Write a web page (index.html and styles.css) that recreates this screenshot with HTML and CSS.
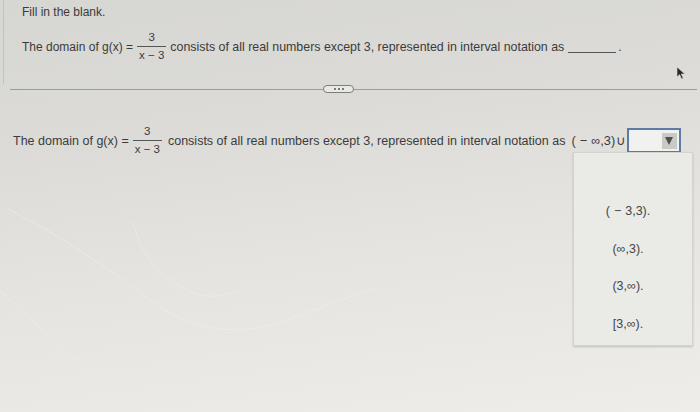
FILE: index.html
```html
<!DOCTYPE html>
<html>
<head>
<meta charset="utf-8">
<link rel="stylesheet" href="styles.css">
</head>
<body>
<div class="page">
  <svg class="glare" width="700" height="412" viewBox="0 0 700 412">
    <path d="M8 209 C 60 235, 110 270, 150 300 C 190 330, 230 335, 270 325 C 300 318, 320 305, 378 288" />
    <path d="M133 222 C 140 255, 165 285, 200 295 C 215 298, 228 295, 238 290" />
    <path d="M0 290 C 30 320, 60 345, 90 372" />
  </svg>

  <div class="top">
    <p class="prompt">Fill in the blank.</p>
    <div class="question">
      <span class="lead">The domain of g(x) =</span>
      <span class="frac"><span class="num">3</span><span class="den">x − 3</span></span>
      <span>consists of all real numbers except 3, represented in interval notation as</span>
      <span class="blank"></span><span>.</span>
    </div>
  </div>

  <div class="divider">
    <span class="rule rule-left"></span>
    <span class="pill"><i></i><i></i><i></i></span>
    <span class="rule"></span>
  </div>

  <svg class="cursor" width="12" height="14" viewBox="0 0 12 14">
    <path d="M2 1 L2 11 L4.6 8.6 L6.6 13 L8.2 12.3 L6.3 8 L9.8 8 Z" fill="#2a2a2a" stroke="#d8d8d4" stroke-width="0.6"/>
  </svg>

  <div class="answer">
    <span>The domain of g(x) =</span>
    <span class="frac frac-wide"><span class="num">3</span><span class="den">x − 3</span></span>
    <span>consists of all real numbers except 3, represented in interval notation as</span>
    <span class="interval">(<span class="op">−</span>∞,3)<span class="cup">∪</span></span>
    <span class="select"><span class="arrow"></span></span>
  </div>

  <ul class="options">
    <li>(<span class="op">−</span>3,3).</li>
    <li>(∞,3).</li>
    <li>(3,∞).</li>
    <li>[3,∞).</li>
  </ul>
</div>
</body>
</html>
```
FILE: styles.css
```css
* { box-sizing: border-box; }
html, body { margin: 0; padding: 0; }
body {
  width: 700px;
  height: 412px;
  overflow: hidden;
  font-family: "Liberation Sans", Arial, sans-serif;
  color: #3b3b3b;
  background: linear-gradient(172deg, #d6d6d2 0%, #dcdbd7 30%, #e5e4e0 60%, #eeede9 100%);
}
.page {
  position: relative;
  width: 700px;
  height: 412px;
}
.glare {
  position: absolute;
  left: 0;
  top: 0;
  fill: none;
  stroke: #f1f1ee;
  stroke-width: 1;
  opacity: 0.55;
}
.top {
  border-left: 1px solid #c2c2be;
  margin-left: 3px;
  padding: 5px 0 0 18px;
  height: 84px;
}
.prompt {
  margin: 0;
  font-size: 12px;
  line-height: 14px;
}
.question, .answer {
  display: flex;
  align-items: center;
  font-size: 12.5px;
  white-space: nowrap;
}
.question { margin-top: 12px; font-size: 12.4px; }
.lead { font-size: 12px; }
.frac {
  display: inline-flex;
  flex-direction: column;
  align-items: center;
  margin: 0 4px 0 4px;
  font-size: 11.5px;
  line-height: 13px;
}
.frac-wide { margin: 0 6px 0 4px; }
.num {
  padding: 0 2px 2px;
  border-bottom: 1px solid #555;
  width: 100%;
  text-align: center;
}
.den { padding: 2px 2px 0; }
.op { margin: 0 4px; }
.cup { margin-left: 1px; }
.blank {
  width: 48px;
  border-bottom: 1px solid #555;
  margin: 0 2px 0 4px;
  align-self: center;
  height: 12px;
}
.divider {
  display: flex;
  align-items: center;
  margin: 0 3px 0 10px;
  height: 10px;
}
.rule {
  flex: 1;
  height: 1px;
  background: #9c9c98;
}
.rule-left { flex: 0 0 313px; }
.pill {
  display: flex;
  align-items: center;
  justify-content: center;
  gap: 2px;
  width: 31px;
  height: 8px;
  border: 1px solid #7d7d7a;
  border-radius: 4px;
  background: #e9e9e6;
}
.pill i {
  width: 2px;
  height: 2px;
  border-radius: 50%;
  background: #555;
}
.cursor {
  position: absolute;
  left: 675px;
  top: 66px;
}
.answer {
  margin: 31px 0 0 13px;
}
.interval { margin-left: 6px; font-size: 12.8px; }
.select {
  display: flex;
  justify-content: flex-end;
  align-items: center;
  width: 54px;
  height: 25px;
  margin-left: 1px;
  border: 2px solid #5d7aa8;
  background: #f1f1ef;
  padding-right: 2px;
}
.arrow {
  width: 15px;
  height: 16px;
  background: #c9c9c6;
  position: relative;
}
.arrow::after {
  content: "";
  position: absolute;
  left: 3px;
  top: 4px;
  border-left: 4.5px solid transparent;
  border-right: 4.5px solid transparent;
  border-top: 8px solid #505050;
}
.options {
  position: absolute;
  left: 573px;
  top: 152px;
  width: 120px;
  height: 194px;
  margin: 0;
  padding: 51px 0 0;
  list-style: none;
  background: #eaeae7;
  border: 1px solid #d3d3cf;
  box-shadow: 0 1px 2px rgba(0,0,0,0.18);
  display: flex;
  flex-direction: column;
  align-items: center;
  gap: 23.5px;
  font-size: 12.5px;
  line-height: 14px;
  color: #454545;
}
.options li { margin-right: 10px; }
```
